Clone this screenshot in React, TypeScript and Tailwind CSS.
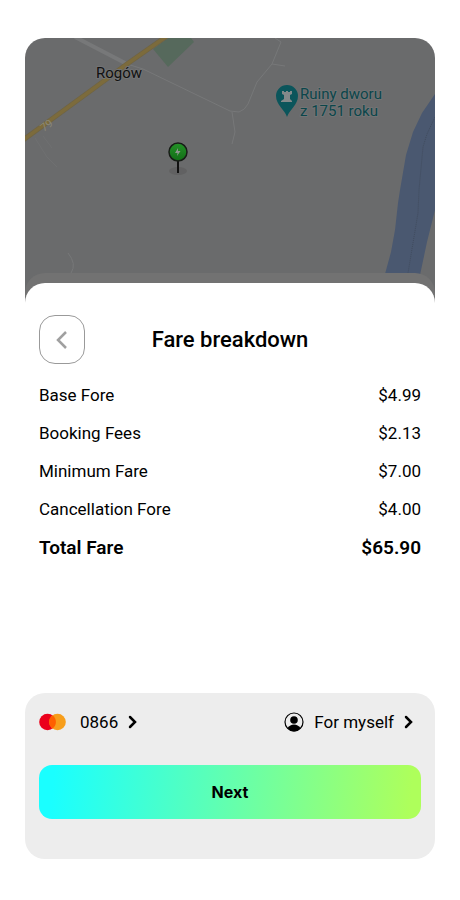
const fares = [
  { label: "Base Fore", amount: "$4.99" },
  { label: "Booking Fees", amount: "$2.13" },
  { label: "Minimum Fare", amount: "$7.00" },
  { label: "Cancellation Fore", amount: "$4.00" },
];

function PickupMap() {
  return (
    <svg
      viewBox="0 0 410 265"
      preserveAspectRatio="xMidYMin slice"
      className="block h-[265px] w-full"
      role="img"
      aria-label="Map"
    >
      <defs>
        <linearGradient id="pin" x1="0" y1="0" x2="0" y2="1">
          <stop offset="0" stopColor="#249228" />
          <stop offset="1" stopColor="#126d16" />
        </linearGradient>
      </defs>
      <rect width="410" height="265" fill="#6a6b6c" />
      {/* park */}
      <path d="M143 0 L128 11 L143 29 L169 4 L166 0 Z" fill="#56695c" />
      {/* minor roads */}
      <g fill="none" stroke="#777879">
        <path d="M50 -1 L102 26" strokeWidth="4" />
        <path d="M102 26 L118 31 L205 73 L214 74 Q220 72 223 66 L232 44 L247 26 L256 4 L250 0" strokeWidth="1" />
        <path d="M247 26 L260 28" strokeWidth="1" />
        <path d="M207 74 L210 94 L207 106" strokeWidth="1" />
        <path d="M10 100 L22 119 L32 129 M18 98 L27 110" strokeWidth="1" stroke="#6f7071" />
        <path d="M43 215 Q52 226 46 235" strokeWidth="1" />
      </g>
      {/* main road */}
      <path d="M-2 102 L68 51 L102 26 L142 -2" fill="none" stroke="#6f6445" strokeWidth="5" />
      <path d="M-2 102 L68 51 L102 26 L142 -2" fill="none" stroke="#7c6b3c" strokeWidth="3.500" />
      <text
        x="22"
        y="91"
        textAnchor="middle"
        transform="rotate(-36 22 88)"
        fontSize="11"
        className="font-['Roboto',sans-serif]"
        fill="#8b8877"
      >
        79
      </text>
      {/* river */}
      <path
        d="M410 56 L397 75 L388 94 L381 117 L375 152 L373 165 L370 192 L366 214 L360 236 L395 237 L402 204 L410 172 Z"
        fill="#4a5870"
      />
      <path
        d="M410 79 L402 96 L398 109 L394 152 L393 175 L383 235"
        fill="none"
        stroke="#414c5e"
        strokeWidth="1"
        strokeDasharray="1 1"
      />
      {/* town and landmark labels */}
      <g
        className="font-['Roboto',sans-serif]"
        fontSize="15"
        stroke="#727374"
        strokeWidth="2"
        strokeLinejoin="round"
        paintOrder="stroke"
      >
        <text x="71" y="40" fill="#111">
          Rogów
        </text>
        <text x="275" y="61" fill="#0b464b">
          Ruiny dworu
        </text>
        <text x="275" y="78" fill="#0b464b">
          z 1751 roku
        </text>
      </g>
      <path
        d="M262 79 C260 72 251 67 251 58 A11 11 0 0 1 273 58 C273 67 264 72 262 79 Z"
        fill="#0b555b"
      />
      <path
        d="M257 53 H259 V54 H261 V53 H263 V54 H265 V53 H267 V56 L265 57 V61 L267 63 V64 H256 V63 L259 61 V57 L257 56 Z"
        fill="#83898a"
      />
      {/* pickup pin */}
      <ellipse cx="153" cy="133" rx="9" ry="4" fill="#616162" />
      <path d="M153 122 V135" stroke="#111" strokeWidth="2" />
      <circle cx="153" cy="114" r="9" fill="url(#pin)" stroke="#171d17" strokeWidth="1.500" />
      <path d="M153 110 L150 115 H152.500 L152 118 L155.500 113 H153 Z" fill="#8b968b" />
      {/* edge of the sheet underneath */}
      <path d="M0 265 V255 A20 20 0 0 1 20 235 H390 A20 20 0 0 1 410 255 V265 Z" fill="#727272" />
    </svg>
  );
}

function Chevron() {
  return (
    <svg viewBox="0 0 10 14" className="h-[14px] w-[10px]" aria-hidden="true">
      <path d="M2 2 L7 7 L2 12" fill="none" stroke="#000" strokeWidth="2.500" strokeLinecap="round" />
    </svg>
  );
}

export default function App() {
  return (
    <main className="flex min-h-screen flex-col bg-white px-[25px] pt-[38px] pb-[41px] font-['Roboto',sans-serif] text-black">
      <div className="overflow-hidden rounded-t-[20px]">
        <PickupMap />
      </div>

      <section className="-mt-5 flex grow flex-col rounded-t-[20px] bg-white pt-8">
        <header className="grid grid-cols-[46px_1fr_46px] items-center px-[14px]">
          <button
            type="button"
            aria-label="Back"
            className="flex h-[49px] w-[46px] items-center justify-center rounded-2xl border border-[#9a9a9a] bg-white"
          >
            <svg viewBox="0 0 12 18" className="h-[18px] w-3" aria-hidden="true">
              <path d="M10 1 L2 9 L10 17" fill="none" stroke="#a0a0a0" strokeWidth="2.500" />
            </svg>
          </button>
          <h1 className="text-center text-[22px] leading-7 font-medium">Fare breakdown</h1>
        </header>

        <div className="px-[14px] pt-3 pb-8">
          <table className="w-full border-collapse text-[17px] leading-5">
            <tbody>
              {fares.map((fare) => (
                <tr key={fare.label} className="h-[38px]">
                  <th scope="row" className="p-0 text-left font-normal">
                    {fare.label}
                  </th>
                  <td className="p-0 text-right">{fare.amount}</td>
                </tr>
              ))}
              <tr className="h-10 text-[19px]">
                <th scope="row" className="p-0 text-left font-semibold">
                  Total Fare
                </th>
                <td className="p-0 text-right font-semibold">$65.90</td>
              </tr>
            </tbody>
          </table>
        </div>

        <footer className="mt-auto rounded-[20px] bg-[#ededed] px-[14px] pt-[17px] pb-10">
          <div className="flex items-center justify-between text-[17px] leading-6">
            <button type="button" className="flex items-center gap-2.5">
              <svg viewBox="0 0 27 18" className="mr-1 h-[18px] w-[27px]" aria-label="Mastercard" role="img">
                <circle cx="8.500" cy="9" r="8.300" fill="#eb001b" />
                <circle cx="18.500" cy="9" r="8.300" fill="#f79e1b" />
                <path d="M13.500 2.300 A8.300 8.300 0 0 1 13.500 15.700 A8.300 8.300 0 0 1 13.500 2.300 Z" fill="#ff5f00" />
              </svg>
              <span>0866</span>
              <Chevron />
            </button>
            <button type="button" className="flex items-center gap-2.5 pr-[7px]">
              <svg viewBox="0 0 20 20" className="h-5 w-5" aria-hidden="true">
                <circle cx="10" cy="10" r="9" fill="none" stroke="#000" strokeWidth="1.200" />
                <circle cx="10" cy="8" r="3.800" fill="#000" />
                <path d="M3.500 16 Q6 12.500 10 12.500 Q14 12.500 16.500 16 Q14 19.500 10 19.500 Q6 19.500 3.500 16 Z" fill="#000" />
              </svg>
              <span>For myself</span>
              <Chevron />
            </button>
          </div>
          <button
            type="button"
            className="mt-[31px] flex h-[54px] w-full items-center justify-center rounded-[13px] bg-[linear-gradient(95deg,#1affff_4%,#aeff5b_97%)] font-['Inter',sans-serif] text-base font-bold"
          >
            Next
          </button>
        </footer>
      </section>
    </main>
  );
}
